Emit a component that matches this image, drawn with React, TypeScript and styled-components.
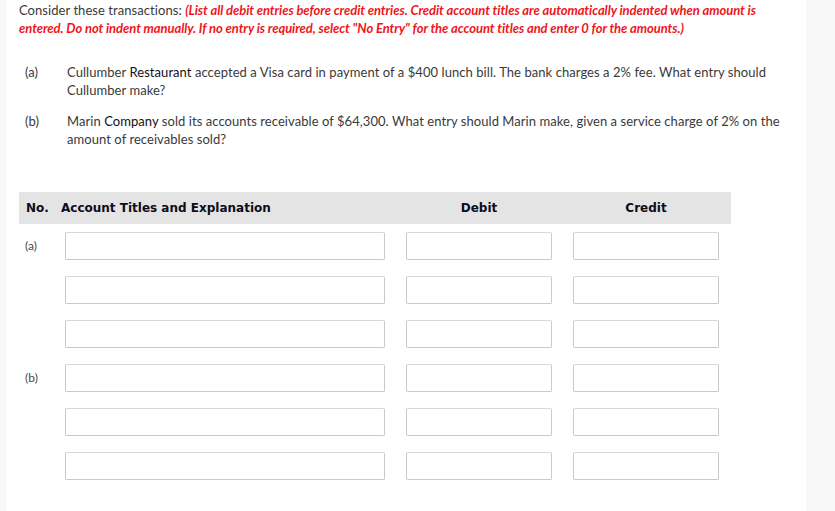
import React from "react";
import styled, { createGlobalStyle } from "styled-components";

const GlobalStyle = createGlobalStyle`
  html, body {
    margin: 0;
    padding: 0;
    background: #f8f8f8;
  }
  * {
    box-sizing: border-box;
  }
`;

const Page = styled.main`
  margin-left: 6px;
  width: 800px;
  min-height: 511px;
  background: #fff;
  padding: 1px 13px 20px;
  font-family: Lato, "Liberation Sans", sans-serif;
  font-size: 13px;
  line-height: 18px;
  letter-spacing: 0.06px;
  color: #3a3a3a;
`;

const Intro = styled.p`
  margin: 0 0 26px;
`;

const Notice = styled.strong`
  color: #ee1621;
  font-style: italic;
  font-weight: bold;
  letter-spacing: -0.07px;
`;

const Transactions = styled.ol`
  list-style: none;
  margin: 0 0 44px;
  padding: 0;
  display: flex;
  flex-direction: column;
  gap: 13px;
`;

const Transaction = styled.li`
  display: grid;
  grid-template-columns: 42px 730px;
  padding-left: 6px;
`;

const Strong = styled.span`
  color: #111;
`;

const Table = styled.section`
  width: 712px;
`;

const Grid = styled.div`
  display: grid;
  grid-template-columns: 25px 320px 146px 146px;
  column-gap: 21px;
  align-items: center;
`;

const HeadRow = styled(Grid)`
  height: 32px;
  background: #e4e4e4;
  font-family: "DejaVu Sans", Verdana, sans-serif;
  font-weight: bold;
  font-size: 12px;
  letter-spacing: 0;
  color: #0c0c1a;
`;

const HeadCell = styled.div<{ $align?: "left" | "center"; $shift?: number }>`
  text-align: ${(p) => p.$align ?? "left"};
  margin-left: ${(p) => p.$shift ?? 0}px;
  white-space: nowrap;
`;

const EntryRow = styled(Grid)`
  height: 44px;
`;

const RowLabel = styled.span`
  padding-left: 6px;
  font-size: 12px;
  color: #4a4a4a;
`;

const Field = styled.input`
  height: 28px;
  width: 100%;
  border: 1px solid #c9c9c9;
  border-top-color: #d8d8d8;
  border-radius: 2px;
  background: #fff;
  padding: 0 6px;
  font-family: inherit;
  font-size: 13px;
`;

type Entry = { label?: string };

const entries: Entry[] = [
  { label: "(a)" },
  {},
  {},
  { label: "(b)" },
  {},
  {},
];

export default function App() {
  return (
    <>
      <GlobalStyle />
      <Page>
        <Intro>
          Consider these transactions:{" "}
          <Notice>
            (List all debit entries before credit entries. Credit account titles are automatically
            indented when amount is entered. Do not indent manually. If no entry is required, select
            "No Entry" for the account titles and enter 0 for the amounts.)
          </Notice>
        </Intro>

        <Transactions>
          <Transaction>
            <span>(a)</span>
            <span>
              Cullumber <Strong>Restaurant</Strong> accepted a Visa card in payment of a $400 lunch
              bill. The bank charges a 2% fee. What entry should Cullumber make?
            </span>
          </Transaction>
          <Transaction>
            <span>(b)</span>
            <span>
              Marin <Strong>Company</Strong> sold its accounts receivable of $64,300. What entry
              should Marin make, given a service charge of 2% on the amount of receivables sold?
            </span>
          </Transaction>
        </Transactions>

        <Table>
          <HeadRow>
            <HeadCell $shift={7}>No.</HeadCell>
            <HeadCell $shift={-4}>Account Titles and Explanation</HeadCell>
            <HeadCell $align="center">Debit</HeadCell>
            <HeadCell $align="center">Credit</HeadCell>
          </HeadRow>
          {entries.map((entry, i) => (
            <EntryRow key={i}>
              <RowLabel>{entry.label}</RowLabel>
              <Field type="text" />
              <Field type="text" />
              <Field type="text" />
            </EntryRow>
          ))}
        </Table>
      </Page>
    </>
  );
}
